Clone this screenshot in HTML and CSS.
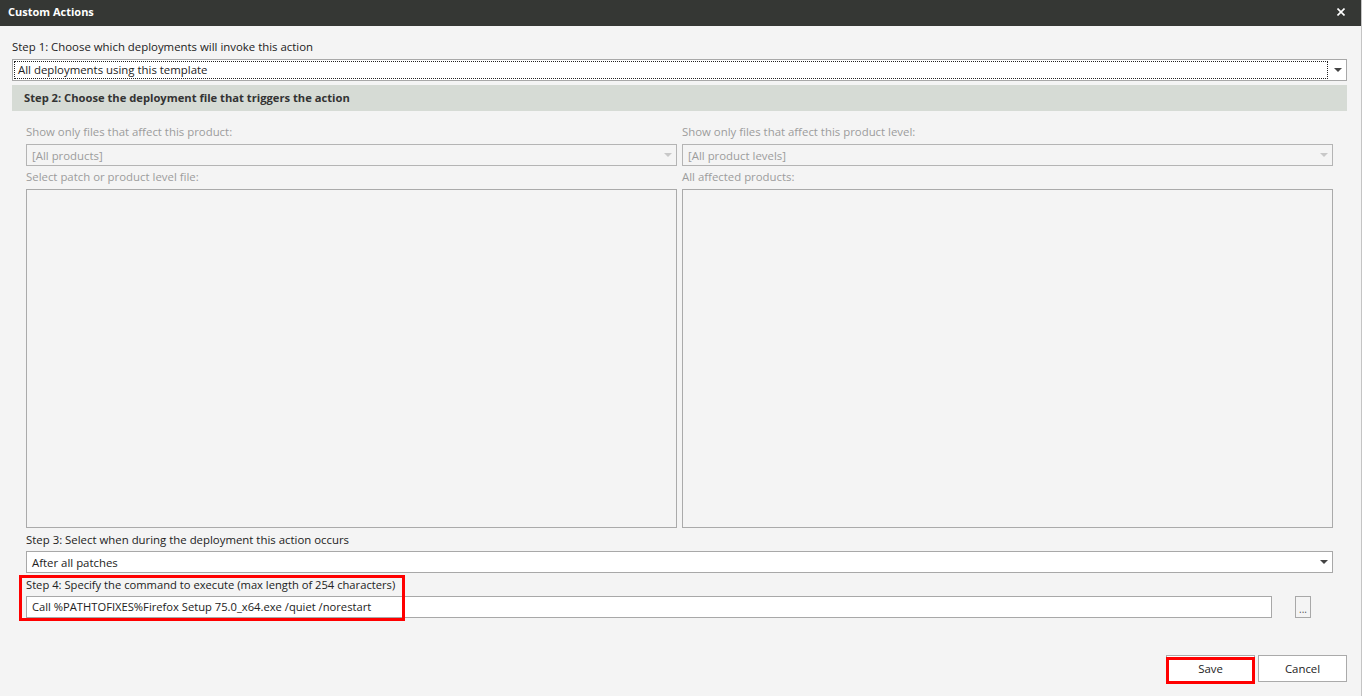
FILE: index.html
```html
<!DOCTYPE html>
<html>
<head>
<meta charset="utf-8">
<link rel="stylesheet" href="styles.css">
</head>
<body>
<div class="dialog">
  <div class="titlebar">
    <span class="title">Custom Actions</span>
    <svg class="close" width="8" height="8" viewBox="0 0 8 8"><path d="M0.5 0.5 L7.5 7.5 M7.5 0.5 L0.5 7.5" stroke="#fff" stroke-width="1.6" fill="none"/></svg>
  </div>
  <div class="content">
    <div class="label step1-label">Step 1: Choose which deployments will invoke this action</div>
    <div class="select focus">
      <div class="focus-rect">All deployments using this template</div>
      <span class="arrow"></span>
    </div>
    <div class="step2-header">Step 2: Choose the deployment file that triggers the action</div>
    <div class="section">
      <div class="cols">
        <div class="col">
          <div class="label disabled first">Show only files that affect this product:</div>
          <div class="select dis"><span class="val">[All products]</span><span class="arrow light"></span></div>
          <div class="label disabled mid">Select patch or product level file:</div>
          <div class="listbox"></div>
        </div>
        <div class="col">
          <div class="label disabled first">Show only files that affect this product level:</div>
          <div class="select dis"><span class="val">[All product levels]</span><span class="arrow light"></span></div>
          <div class="label disabled mid">All affected products:</div>
          <div class="listbox"></div>
        </div>
      </div>
      <div class="label step3-label">Step 3: Select when during the deployment this action occurs</div>
      <div class="select white"><span class="val">After all patches</span><span class="arrow"></span></div>
      <div class="step4">
        <div class="label step4-label">Step 4: Specify the command to execute (max length of 254 characters)</div>
        <div class="cmd-row">
          <div class="input">Call %PATHTOFIXES%Firefox Setup 75.0_x64.exe /quiet /norestart</div>
          <div class="browse">...</div>
        </div>
        <div class="highlight step4-hl"></div>
      </div>
    </div>
    <div class="buttons">
      <div class="btn-wrap">
        <div class="btn">Save</div>
        <div class="highlight save-hl"></div>
      </div>
      <div class="btn">Cancel</div>
    </div>
  </div>
</div>
</body>
</html>
```
FILE: styles.css
```css
html, body {
  margin: 0;
  padding: 0;
}
body {
  width: 1362px;
  height: 696px;
  overflow: hidden;
  background: #f4f4f4;
  font-family: "Open Sans", "Liberation Sans", sans-serif;
  font-size: 11.4px;
  color: #222;
}
.dialog {
  height: 696px;
  border-right: 1px solid #c4c4c4;
  box-sizing: border-box;
}
.titlebar {
  height: 26px;
  background: #353734;
  display: flex;
  align-items: center;
  justify-content: space-between;
  padding: 0 16px 4px 8px;
  box-sizing: border-box;
}
.title {
  color: #fff;
  font-weight: bold;
  font-size: 11px;
}
.close {
  display: block;
  margin-top: 2px;
}
.content {
  padding: 0 14px 0 12px;
}
.label {
  height: 16px;
  line-height: 16px;
  white-space: nowrap;
}
.step1-label {
  margin-top: 13px;
  margin-bottom: 4px;
}
.select {
  height: 22px;
  box-sizing: border-box;
  border: 1px solid #a8a8a8;
  display: flex;
  align-items: center;
  position: relative;
}
.select.focus {
  background: #fff;
  padding: 1px;
}
.focus-rect {
  flex: 1;
  height: 18px;
  line-height: 16px;
  box-sizing: border-box;
  border: 1px dotted #222;
  padding-left: 3px;
  margin-right: 17px;
}
.arrow {
  width: 0;
  height: 0;
  border-left: 4px solid transparent;
  border-right: 4px solid transparent;
  border-top: 4px solid #444;
  position: absolute;
  right: 4px;
  top: 8px;
}
.arrow.light {
  border-top-color: #c8c8c8;
}
.step2-header {
  margin-top: 4px;
  height: 26px;
  line-height: 26px;
  background: #d6dbd5;
  font-weight: bold;
  font-size: 11.2px;
  color: #333;
  padding-left: 12px;
}
.section {
  padding: 0 14px;
}
.cols {
  display: flex;
  gap: 5px;
}
.col {
  flex: 1;
  display: flex;
  flex-direction: column;
}
.disabled {
  color: #9c9c9c;
}
.label.first {
  margin-top: 13px;
  margin-bottom: 4px;
}
.select.dis {
  background: #f4f4f4;
  border-color: #b4b4b4;
  color: #9c9c9c;
}
.val {
  padding-left: 5px;
}
.label.mid {
  margin-top: 3px;
  margin-bottom: 4px;
}
.listbox {
  height: 339px;
  box-sizing: border-box;
  border: 1px solid #aaa;
  background: #f4f4f4;
}
.step3-label {
  margin-top: 4px;
  margin-bottom: 3px;
}
.select.white {
  background: #fff;
}
.step4 {
  position: relative;
  margin-top: 4px;
}
.step4-label {
  margin-bottom: 3px;
  font-size: 11.2px;
}
.cmd-row {
  display: flex;
  gap: 23px;
  padding-right: 22px;
}
.input {
  flex: 1;
  height: 22px;
  line-height: 19px;
  box-sizing: border-box;
  border: 1px solid #a8a8a8;
  background: #fff;
  padding-left: 5px;
  white-space: nowrap;
  font-size: 11.2px;
}
.browse {
  width: 16px;
  height: 22px;
  box-sizing: border-box;
  border: 1px solid #a8a8a8;
  background: #f4f4f4;
  font-size: 10px;
  text-align: center;
  line-height: 24px;
  color: #555;
}
.highlight {
  position: absolute;
  border: 3px solid #ff0000;
  box-sizing: border-box;
  pointer-events: none;
}
.step4-hl {
  left: -7px;
  top: -2px;
  width: 386px;
  height: 46px;
}
.buttons {
  display: flex;
  justify-content: flex-end;
  gap: 3px;
  margin-top: 37px;
}
.btn-wrap {
  position: relative;
}
.btn {
  width: 89px;
  height: 27px;
  box-sizing: border-box;
  border: 1px solid #aaa;
  background: #fff;
  text-align: center;
  line-height: 25px;
  color: #222;
}
.save-hl {
  left: 0;
  top: 2px;
  width: 89px;
  height: 27px;
}
```
